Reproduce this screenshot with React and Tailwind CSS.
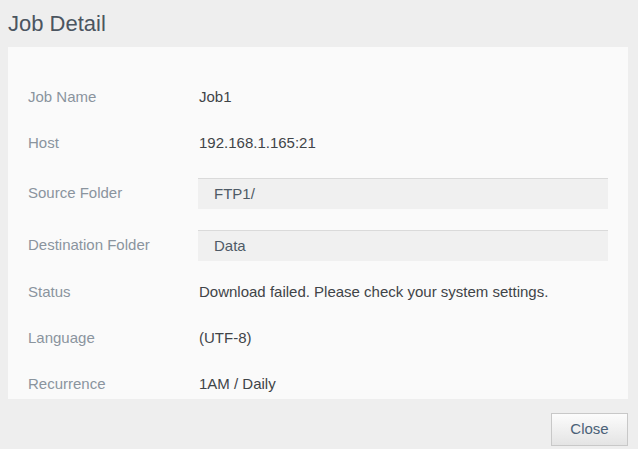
const rows = [
    { label: "Job Name", value: "Job1" },
    { label: "Host", value: "192.168.1.165:21" },
];

const folders = [
    { label: "Source Folder", value: "FTP1/", className: "mt-[12px]" },
    { label: "Destination Folder", value: "Data", className: "mt-[21px]" },
];

const moreRows = [
    { label: "Status", value: "Download failed. Please check your system settings." },
    { label: "Language", value: "(UTF-8)" },
    { label: "Recurrence", value: "1AM / Daily" },
];

const Row = ({ label, value }) => (
    <div className="flex h-[46px] items-center">
        <div className="w-[171px] shrink-0 text-[#8a949e]">{label}</div>
        <div className="text-[#3f4448]">{value}</div>
    </div>
);

export default function App() {
    return (
        <div
            className="h-[449px] w-[638px] overflow-hidden bg-[#eeeeee] text-[15px]"
            style={{ fontFamily: '"Liberation Sans", Arial, sans-serif' }}
        >
            <div className="flex h-[47px] items-center pb-[1px] pl-[8px] text-[22px] text-[#4b5560]">
                Job Detail
            </div>

            <div className="ml-[8px] h-[352px] w-[620px] overflow-hidden bg-[#fafafa] pl-[20px] pr-[20px] pt-[27px]">
                {rows.map((r) => (
                    <Row key={r.label} {...r} />
                ))}

                {folders.map((f) => (
                    <div key={f.label} className={`flex items-center ${f.className}`}>
                        <div className="w-[170px] shrink-0 text-[#8a949e]">{f.label}</div>
                        <div className="flex h-[31px] flex-1 items-center border-t border-[#dadada] bg-[#f0f0f0] pl-[16px] text-[#4e5a66]">
                            {f.value}
                        </div>
                    </div>
                ))}

                <div className="mt-[8px]">
                    {moreRows.map((r) => (
                        <Row key={r.label} {...r} />
                    ))}
                </div>
            </div>

            <div className="flex justify-end pr-[10px] pt-[14px]">
                <button className="h-[33px] w-[77px] border border-[#c8c8c8] bg-gradient-to-b from-[#fcfcfc] to-[#e4e4e4] text-[15px] text-[#4a6177]">
                    Close
                </button>
            </div>
        </div>
    );
}
